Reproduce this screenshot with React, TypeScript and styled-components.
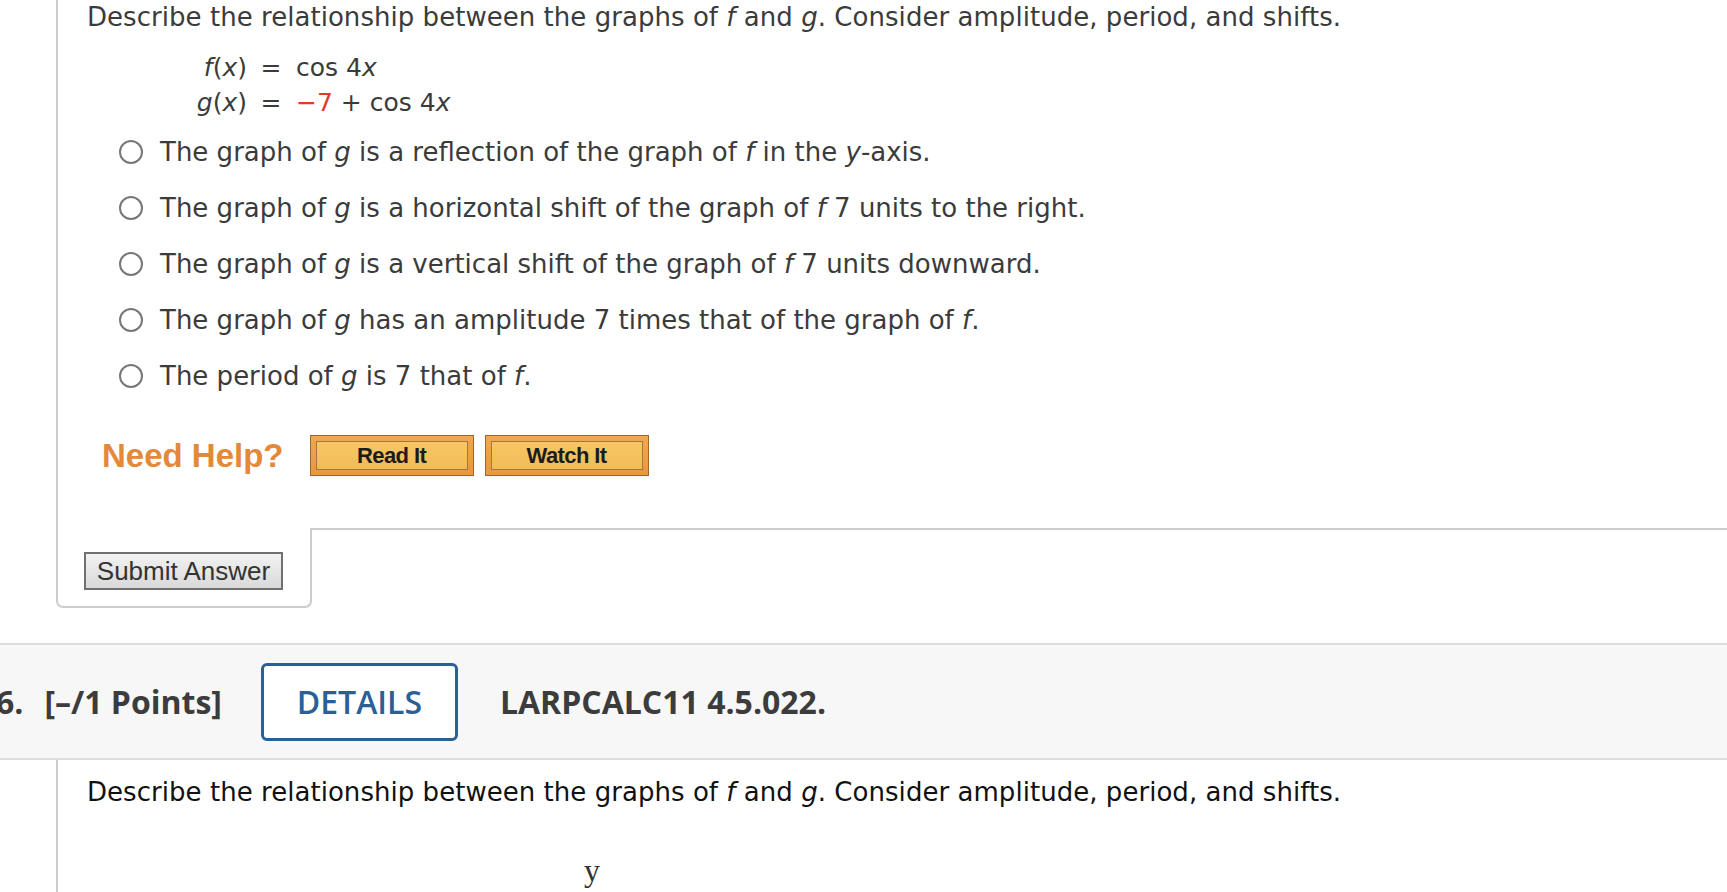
import React from 'react'
import styled, { createGlobalStyle } from 'styled-components'

const GlobalStyle = createGlobalStyle`
  html, body {
    margin: 0;
    padding: 0;
    background: #ffffff;
  }
  body {
    font-family: "DejaVu Sans", Verdana, sans-serif;
    overflow: hidden;
  }
`

const Page = styled.div`
  width: 1727px;
  height: 892px;
  overflow: hidden;
`

const QuestionCard = styled.section`
  margin-left: 56px;
  display: flex;
  flex-direction: column;
`

const CardBody = styled.div<{ $tone: 'muted' | 'dark' }>`
  border-left: 2px solid #cccccc;
  padding: 2px 0 52px 29px;
  color: ${(p) => (p.$tone === 'dark' ? '#111111' : '#3b3b3b')};
`

const Prompt = styled.p`
  margin: 0;
  font-size: 26px;
  line-height: 30px;
  letter-spacing: 0.04px;
  white-space: nowrap;
`

const Var = styled.i`
  font-style: italic;
`

const EquationGrid = styled.div`
  display: grid;
  grid-template-columns: 160px 48px auto;
  grid-auto-rows: 35px;
  align-items: center;
  margin-top: 18px;
  font-size: 25px;
  line-height: 35px;
`

const EqLeft = styled.span`
  text-align: right;
`

const EqSign = styled.span`
  text-align: center;
`

const EqRight = styled.span`
  padding-left: 1px;
`

const Accent = styled.span`
  color: #e5372a;
`

const Options = styled.ul`
  list-style: none;
  margin: 4px 0 0;
  padding: 0;
`

const OptionRow = styled.li`
  display: flex;
  align-items: center;
  gap: 17px;
  height: 56px;
  padding-left: 32px;
  font-size: 26px;
  white-space: nowrap;
`

const Radio = styled.span`
  display: inline-block;
  flex: none;
  width: 24px;
  height: 24px;
  box-sizing: border-box;
  border: 2px solid #777777;
  border-radius: 50%;
  background: #ffffff;
`

const HelpRow = styled.div`
  display: flex;
  align-items: center;
  height: 41px;
  margin-top: 31px;
  padding-left: 15px;
`

const NeedHelp = styled.span`
  margin-right: 26px;
  font-family: "Liberation Sans", Arial, sans-serif;
  font-weight: 700;
  font-size: 33px;
  color: #e3893a;
  white-space: nowrap;
`

const HelpButton = styled.button`
  width: 164px;
  height: 41px;
  margin-right: 11px;
  padding: 5px;
  box-sizing: border-box;
  border: 1px solid #a2662a;
  background: linear-gradient(#f0a850, #e8973f);
  cursor: pointer;
`

const HelpFace = styled.span`
  display: flex;
  align-items: center;
  justify-content: center;
  height: 100%;
  box-sizing: border-box;
  border: 1px solid #a8763a;
  background: linear-gradient(#f6c764, #f2bc58);
  font-family: "Liberation Sans", Arial, sans-serif;
  font-weight: 700;
  font-size: 22px;
  letter-spacing: -0.6px;
  color: #1c1c1c;
`

const Footer = styled.div`
  display: flex;
  align-items: flex-start;
`

const SubmitCell = styled.div`
  width: 256px;
  box-sizing: border-box;
  padding: 24px 0 16px 26px;
  border: 2px solid #cccccc;
  border-top: none;
  border-radius: 0 0 7px 7px;
`

const FooterRule = styled.div`
  flex: 1;
  border-top: 2px solid #cccccc;
`

const SubmitButton = styled.button`
  width: 199px;
  height: 38px;
  padding: 0;
  box-sizing: border-box;
  border: 2px solid #707070;
  background: linear-gradient(#f2f2f2, #d9d9d9);
  font-family: "Liberation Sans", Arial, sans-serif;
  font-size: 26px;
  color: #333333;
  cursor: pointer;
`

const QuestionBand = styled.header`
  display: flex;
  align-items: center;
  height: 117px;
  margin-top: 35px;
  box-sizing: border-box;
  border-top: 2px solid #dddddd;
  border-bottom: 2px solid #dddddd;
  background: #f7f7f7;
  font-family: "Open Sans", sans-serif;
  font-weight: 700;
  font-size: 32px;
  color: #3c3c3c;
  white-space: nowrap;
`

const QuestionNumber = styled.span`
  margin-left: -4px;
  margin-right: 21px;
`

const DetailsButton = styled.button`
  width: 197px;
  height: 78px;
  margin: 0 42px 0 39px;
  box-sizing: border-box;
  border: 3px solid #2b6095;
  border-radius: 6px;
  background: #ffffff;
  font-family: "Open Sans", sans-serif;
  font-weight: 600;
  font-size: 32px;
  color: #2a6096;
  cursor: pointer;
`

const NextCard = styled.section`
  margin-left: 56px;
  height: 200px;
  border-left: 2px solid #cccccc;
  padding: 17px 0 0 29px;
  color: #111111;
`

const GraphLabel = styled.div`
  margin-top: 45px;
  padding-left: 497px;
  font-family: "Liberation Serif", "Times New Roman", serif;
  font-size: 32px;
  line-height: 36px;
  color: #333333;
`

const options: React.ReactNode[] = [
  <>The graph of <Var>g</Var> is a reflection of the graph of <Var>f</Var> in the <Var>y</Var>-axis.</>,
  <>The graph of <Var>g</Var> is a horizontal shift of the graph of <Var>f</Var> 7 units to the right.</>,
  <>The graph of <Var>g</Var> is a vertical shift of the graph of <Var>f</Var> 7 units downward.</>,
  <>The graph of <Var>g</Var> has an amplitude 7 times that of the graph of <Var>f</Var>.</>,
  <>The period of <Var>g</Var> is 7 that of <Var>f</Var>.</>,
]

function PromptText() {
  return (
    <Prompt>
      Describe the relationship between the graphs of <Var>f</Var> and <Var>g</Var>. Consider amplitude, period, and shifts.
    </Prompt>
  )
}

export default function App() {
  return (
    <Page>
      <GlobalStyle />
      <QuestionCard>
        <CardBody $tone='muted'>
          <PromptText />
          <EquationGrid>
            <EqLeft><Var>f</Var>(<Var>x</Var>)</EqLeft>
            <EqSign>=</EqSign>
            <EqRight>cos 4<Var>x</Var></EqRight>
            <EqLeft><Var>g</Var>(<Var>x</Var>)</EqLeft>
            <EqSign>=</EqSign>
            <EqRight><Accent>−7</Accent> + cos 4<Var>x</Var></EqRight>
          </EquationGrid>
          <Options>
            {options.map((text, i) => (
              <OptionRow key={i}>
                <Radio />
                <span>{text}</span>
              </OptionRow>
            ))}
          </Options>
          <HelpRow>
            <NeedHelp>Need Help?</NeedHelp>
            <HelpButton><HelpFace>Read It</HelpFace></HelpButton>
            <HelpButton><HelpFace>Watch It</HelpFace></HelpButton>
          </HelpRow>
        </CardBody>
        <Footer>
          <SubmitCell>
            <SubmitButton>Submit Answer</SubmitButton>
          </SubmitCell>
          <FooterRule />
        </Footer>
      </QuestionCard>

      <QuestionBand>
        <QuestionNumber>6.</QuestionNumber>
        <span>[–/1 Points]</span>
        <DetailsButton>DETAILS</DetailsButton>
        <span>LARPCALC11 4.5.022.</span>
      </QuestionBand>

      <NextCard>
        <PromptText />
        <GraphLabel>y</GraphLabel>
      </NextCard>
    </Page>
  )
}
